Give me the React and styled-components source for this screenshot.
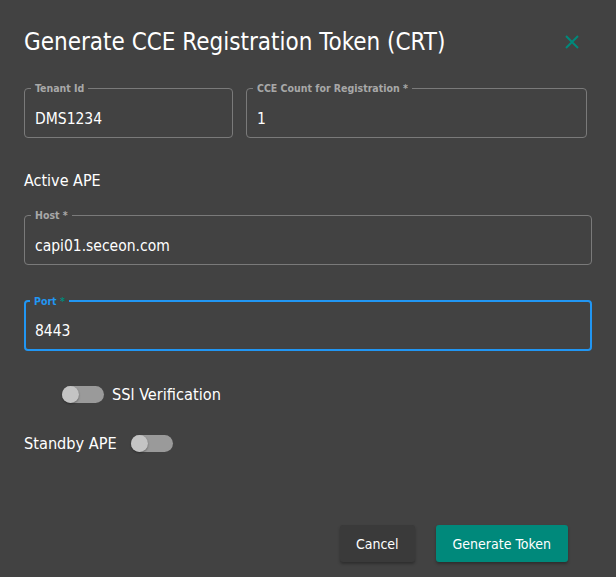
import styled, { createGlobalStyle } from 'styled-components'

const Global = createGlobalStyle`
  html, body {
    margin: 0;
    padding: 0;
    background-color: #424242;
  }
  body {
    font-family: "DejaVu Sans", "Noto Sans", sans-serif;
    font-stretch: condensed;
    color: #ffffff;
  }
`

const Dialog = styled.div`
  width: 616px;
  height: 577px;
  box-sizing: border-box;
  background-color: #424242;
  padding: 28px 24px 0 24px;
  display: flex;
  flex-direction: column;
`

const Header = styled.div`
  display: flex;
  align-items: center;
  justify-content: space-between;
  height: 28px;
`

const Title = styled.h2`
  margin: 0;
  font-size: 24px;
  font-weight: 400;
  color: #ffffff;
`

const CloseButton = styled.button`
  background: none;
  border: none;
  padding: 0;
  margin-right: 12px;
  width: 16px;
  height: 16px;
  display: flex;
  align-items: center;
  justify-content: center;
  cursor: pointer;
`

const FieldRow = styled.div`
  display: grid;
  grid-template-columns: 209px 341px;
  gap: 13px;
  margin-top: ${(p) => p.$top || 0}px;
`

const Fieldset = styled.fieldset`
  margin: 0;
  margin-top: ${(p) => p.$top || 0}px;
  width: ${(p) => (p.$full ? '568px' : 'auto')};
  box-sizing: border-box;
  height: 56px;
  border: ${(p) => (p.$focused ? '2px solid #2196f3' : '1px solid #7a7a7a')};
  border-radius: 4px;
  padding: 0 ${(p) => (p.$focused ? '9px' : '10px')};
`

const Legend = styled.legend`
  margin-left: ${(p) => (p.$focused ? '-5px' : '-4px')};
  padding: 0 4px;
  font-size: 10.5px;
  font-weight: 700;
  line-height: 12px;
  color: ${(p) => (p.$focused ? '#2196f3' : '#a8a8a8')};
`

const Star = styled.span`
  color: ${(p) => (p.$focused ? '#00897b' : 'inherit')};
`

const Value = styled.div`
  font-size: 15.5px;
  line-height: 18px;
  margin-top: ${(p) => (p.$focused ? 15 : 16)}px;
  color: #ffffff;
`

const SectionTitle = styled.div`
  font-size: 16px;
  color: #ffffff;
  margin-top: 34px;
  line-height: 18px;
`

const ToggleRow = styled.div`
  display: flex;
  align-items: center;
  gap: ${(p) => p.$gap || 8}px;
  margin-top: ${(p) => p.$top || 0}px;
  padding-left: ${(p) => p.$indent || 0}px;
  font-size: 16.2px;
  height: 20px;
`

const Track = styled.span`
  width: 42px;
  height: 17px;
  border-radius: 9px;
  background-color: #9a9a9a;
  position: relative;
  display: inline-block;
  flex-shrink: 0;
`

const Thumb = styled.span`
  position: absolute;
  left: 0;
  top: 0;
  width: 17px;
  height: 17px;
  border-radius: 50%;
  background-color: #c4c4c4;
  box-shadow: 0 1px 2px rgba(0, 0, 0, 0.35);
`

const Footer = styled.div`
  display: flex;
  justify-content: flex-end;
  gap: 21px;
  margin-top: 72px;
  padding-right: 24px;
`

const Button = styled.button`
  height: 37px;
  padding: 0 ${(p) => (p.$primary ? '17px' : '16px')};
  border: none;
  border-radius: 3px;
  font-family: inherit;
  font-stretch: condensed;
  font-size: 14px;
  color: #ffffff;
  background-color: ${(p) => (p.$primary ? '#00897b' : '#3a3a3a')};
  box-shadow: 0 2px 3px rgba(0, 0, 0, 0.3);
  cursor: pointer;
`

function Field({ label, value, required, focused, full, top }) {
  return (
    <Fieldset $focused={focused} $full={full} $top={top}>
      <Legend $focused={focused}>
        {label}
        {required && <Star $focused={focused}> *</Star>}
      </Legend>
      <Value $focused={focused}>{value}</Value>
    </Fieldset>
  )
}

function Switch() {
  return (
    <Track>
      <Thumb />
    </Track>
  )
}

function App() {
  return (
    <>
      <Global />
      <Dialog>
        <Header>
          <Title>Generate CCE Registration Token (CRT)</Title>
          <CloseButton aria-label="close">
            <svg width="14" height="14" viewBox="0 0 14 14">
              <path d="M1 1 L13 13 M13 1 L1 13" stroke="#00897b" strokeWidth="2" fill="none" />
            </svg>
          </CloseButton>
        </Header>
        <FieldRow $top={26}>
          <Field label="Tenant Id" value="DMS1234" />
          <Field label="CCE Count for Registration" required value="1" />
        </FieldRow>
        <SectionTitle>Active APE</SectionTitle>
        <Field label="Host" required value="capi01.seceon.com" full top={19} />
        <Field label="Port" required value="8443" full focused top={30} />
        <ToggleRow $indent={38} $top={33}>
          <Switch />
          <span>SSl Verification</span>
        </ToggleRow>
        <ToggleRow $top={29} $gap={14}>
          <span>Standby APE</span>
          <Switch />
        </ToggleRow>
        <Footer>
          <Button>Cancel</Button>
          <Button $primary>Generate Token</Button>
        </Footer>
      </Dialog>
    </>
  )
}

export default App
